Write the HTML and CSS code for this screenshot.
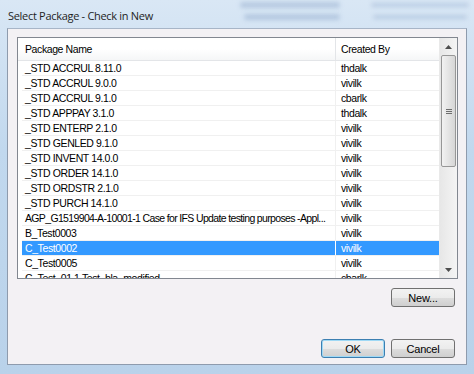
FILE: index.html
```html
<!DOCTYPE html>
<html lang="en">
<head>
    <meta charset="UTF-8">
    <title>Select Package - Check in New</title>
    <link rel="stylesheet" href="styles.css">
</head>
<body>
    <div class="window">
        <div class="titlebar">
            <span class="title">Select Package - Check in New</span>
            <span class="ghost ghost-1"></span>
            <span class="ghost ghost-2"></span>
        </div>
        <div class="client">
            <div class="list">
                <div class="list-body">
                    <div class="header">
                        <div class="col-name">Package Name</div>
                        <div class="col-by">Created By</div>
                    </div>
                    <div class="rows">
                        <div class="row"><div class="col-name">_STD ACCRUL 8.11.0</div><div class="col-by">thdalk</div></div>
                        <div class="row"><div class="col-name">_STD ACCRUL 9.0.0</div><div class="col-by">vivilk</div></div>
                        <div class="row"><div class="col-name">_STD ACCRUL 9.1.0</div><div class="col-by">cbarlk</div></div>
                        <div class="row"><div class="col-name">_STD APPPAY 3.1.0</div><div class="col-by">thdalk</div></div>
                        <div class="row"><div class="col-name">_STD ENTERP 2.1.0</div><div class="col-by">vivilk</div></div>
                        <div class="row"><div class="col-name">_STD GENLED 9.1.0</div><div class="col-by">vivilk</div></div>
                        <div class="row"><div class="col-name">_STD INVENT 14.0.0</div><div class="col-by">vivilk</div></div>
                        <div class="row"><div class="col-name">_STD ORDER 14.1.0</div><div class="col-by">vivilk</div></div>
                        <div class="row"><div class="col-name">_STD ORDSTR 2.1.0</div><div class="col-by">vivilk</div></div>
                        <div class="row"><div class="col-name">_STD PURCH 14.1.0</div><div class="col-by">vivilk</div></div>
                        <div class="row"><div class="col-name long">AGP_G1519904-A-10001-1 Case for IFS Update testing purposes -Appl...</div><div class="col-by">vivilk</div></div>
                        <div class="row"><div class="col-name">B_Test0003</div><div class="col-by">vivilk</div></div>
                        <div class="row selected"><div class="col-name">C_Test0002</div><div class="col-by">vivilk</div></div>
                        <div class="row"><div class="col-name">C_Test0005</div><div class="col-by">vivilk</div></div>
                        <div class="row partial"><div class="col-name">C_Test_01.1 Test_bla_modified</div><div class="col-by">cbarlk</div></div>
                    </div>
                </div>
                <div class="scrollbar">
                    <div class="arrow">
                        <svg width="7" height="4" viewBox="0 0 7 4"><path d="M3.5 0 L7 4 L0 4 Z" fill="#4d4d4d"/></svg>
                    </div>
                    <div class="track">
                        <div class="thumb">
                            <span class="grip"></span>
                            <span class="grip"></span>
                            <span class="grip"></span>
                        </div>
                    </div>
                    <div class="arrow">
                        <svg width="7" height="4" viewBox="0 0 7 4"><path d="M0 0 L7 0 L3.5 4 Z" fill="#4d4d4d"/></svg>
                    </div>
                </div>
            </div>
            <div class="button-row new-row">
                <button class="btn">New...</button>
            </div>
            <div class="button-row">
                <button class="btn default">OK</button>
                <button class="btn">Cancel</button>
            </div>
        </div>
    </div>
</body>
</html>
```

FILE: styles.css
```css
body {
    margin: 0;
    background-color: #bcd5ec;
    font-family: "Liberation Sans", Arial, sans-serif;
    font-size: 10.5px;
    letter-spacing: -0.4px;
    color: #000;
}
.window {
    width: 474px;
    height: 374px;
    display: flex;
    flex-direction: column;
    background: linear-gradient(to bottom, #d9e7f5 0%, #c1d8ee 40%, #b9d2ea 100%);
    overflow: hidden;
}
.titlebar {
    height: 28px;
    flex: none;
    position: relative;
    display: flex;
    align-items: center;
    padding-left: 8px;
}
.title {
    font-family: "Open Sans", "Liberation Sans", sans-serif;
    font-size: 11px;
    color: #1e1e1e;
    letter-spacing: -0.3px;
    position: relative;
    top: 1px;
}
.ghost {
    position: absolute;
    height: 6px;
    background: rgba(120, 150, 190, 0.35);
    filter: blur(2px);
    border-radius: 3px;
}
.ghost-1 {
    left: 240px;
    top: 2px;
    width: 100px;
    box-shadow: 130px 0 0 -1px rgba(120, 150, 190, 0.3);
}
.ghost-2 {
    left: 244px;
    top: 14px;
    width: 96px;
    box-shadow: 128px 0 0 -1px rgba(120, 150, 190, 0.3);
}
.client {
    flex: none;
    height: 337px;
    margin: 0 7px;
    background-color: #f3f1f4;
    border: 1px solid #8e9bad;
    border-top-color: #a7b5c7;
    box-sizing: border-box;
    padding: 8px 8px 0 9px;
}
.list {
    height: 242px;
    border: 1px solid #828790;
    background-color: #fff;
    display: flex;
    box-sizing: border-box;
}
.list-body {
    flex: 1;
    overflow: hidden;
}
.header {
    display: flex;
    height: 22px;
    align-items: center;
    background: linear-gradient(to bottom, #ffffff 0%, #ffffff 50%, #f5f6f7 100%);
    border-bottom: 1px solid #e3e5e8;
}
.header .col-name {
    width: 310px;
    padding-left: 7px;
    height: 22px;
    line-height: 22px;
    border-right: 1px solid #e3e5e8;
}
.header .col-by {
    padding-left: 5px;
}
.rows {
    padding-left: 4px;
}
.row {
    display: flex;
    height: 15px;
    line-height: 15px;
    border-bottom: 1px solid #f0f0f0;
    box-sizing: border-box;
    white-space: nowrap;
}
.row .col-name {
    width: 310px;
    padding-left: 3px;
    overflow: hidden;
    border-right: 1px solid #f0f0f0;
}
.row .col-name.long {
    letter-spacing: -0.65px;
}
.row .col-by {
    padding-left: 5px;
    flex: 1;
}
.row.selected {
    background-color: #3399ff;
    color: #fff;
}
.row.selected .col-name {
    border-right-color: #fff;
}
.scrollbar {
    width: 17px;
    flex: none;
    display: flex;
    flex-direction: column;
    background: linear-gradient(to right, #e7e7e7, #f4f4f4);
    border-left: 1px solid #e9e9e9;
}
.arrow {
    height: 17px;
    display: flex;
    align-items: center;
    justify-content: center;
}
.track {
    flex: 1;
}
.thumb {
    margin: 0 1px;
    height: 110px;
    border: 1px solid #979797;
    border-radius: 2px;
    background: linear-gradient(to right, #f2f2f2, #e4e4e4 50%, #d6d6d6);
    display: flex;
    flex-direction: column;
    align-items: center;
    justify-content: center;
    gap: 1px;
}
.grip {
    width: 6px;
    height: 1px;
    background-color: #6d6d6d;
}
.button-row {
    display: flex;
    justify-content: flex-end;
    gap: 6px;
    margin-top: 9px;
    padding-right: 3px;
}
.new-row {
    margin-bottom: 32px;
}
.btn {
    width: 64px;
    height: 19px;
    padding: 0;
    font-family: "Liberation Sans", Arial, sans-serif;
    font-size: 11px;
    letter-spacing: -0.2px;
    color: #000;
    border: 1px solid #707070;
    border-radius: 3px;
    background: linear-gradient(to bottom, #f2f2f2 0%, #ebebeb 50%, #dddddd 51%, #cfcfcf 100%);
}
.btn.default {
    border-color: #3c7fb1;
    box-shadow: inset 0 0 0 1px #9fd9f5;
}
```
